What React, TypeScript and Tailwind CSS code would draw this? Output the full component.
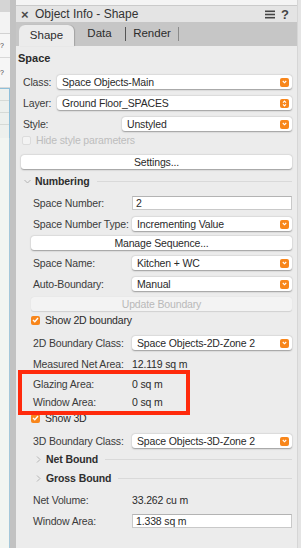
import React from "react";

// Object Info palette – Vectorworks style (macOS)

const ORANGE = "bg-[#f8861b]";
const TXT = "text-[10.5px] leading-[13px] tracking-[-0.15px] whitespace-nowrap";

function Chevron({ double }: { double?: boolean }) {
  return (
    <span className={`flex h-[9px] w-[9px] shrink-0 items-center justify-center rounded-[2px] ${ORANGE}`}>
      {double ? (
        <svg width="5" height="7" viewBox="0 0 5 7" fill="none" stroke="white" strokeWidth="1.1">
          <path d="M1 2.6 L2.5 1.1 L4 2.6" />
          <path d="M1 4.4 L2.5 5.9 L4 4.4" />
        </svg>
      ) : (
        <svg width="5" height="4" viewBox="0 0 5 4" fill="none" stroke="white" strokeWidth="1.1">
          <path d="M0.8 1 L2.5 2.8 L4.2 1" />
        </svg>
      )}
    </span>
  );
}

function Drop({ value, double, className = "" }: { value: string; double?: boolean; className?: string }) {
  return (
    <div
      className={`flex h-[14px] items-center rounded-[3px] bg-white pl-[5px] pr-[3px] shadow-[0_0.5px_1.5px_rgba(0,0,0,0.35)] ${className}`}
    >
      <span className={`flex-1 overflow-hidden text-[#2a2a2a] ${TXT}`}>{value}</span>
      <Chevron double={double} />
    </div>
  );
}

function Field({ value }: { value: string }) {
  return (
    <div className={`flex h-[14px] flex-1 items-center border border-[#c9c9c9] border-t-[#b3b3b3] bg-white pl-[3px] text-[#2a2a2a] ${TXT}`}>
      {value}
    </div>
  );
}

function Button({ label, disabled }: { label: string; disabled?: boolean }) {
  return (
    <div
      className={`flex h-[14px] items-center justify-center rounded-[3px] ${TXT} ${
        disabled
          ? "bg-[#f3f3f3] text-[#b9b9b9] shadow-[0_0.5px_1px_rgba(0,0,0,0.12)]"
          : "bg-white text-[#2a2a2a] shadow-[0_0.5px_1.5px_rgba(0,0,0,0.35)]"
      }`}
    >
      {label}
    </div>
  );
}

function Check({ on, disabled }: { on?: boolean; disabled?: boolean }) {
  if (on) {
    return (
      <span className={`flex h-[9px] w-[9px] shrink-0 items-center justify-center rounded-[2px] ${ORANGE}`}>
        <svg width="7" height="6" viewBox="0 0 7 6" fill="none" stroke="white" strokeWidth="1.4">
          <path d="M1 3 L2.8 4.8 L6 1" />
        </svg>
      </span>
    );
  }
  return (
    <span
      className={`h-[9px] w-[9px] shrink-0 rounded-[2px] border ${
        disabled ? "border-[#dcdcdc] bg-[#f3f3f3]" : "border-[#b5b5b5] bg-white"
      }`}
    />
  );
}

function Row({ label, children, className = "" }: { label: string; children: React.ReactNode; className?: string }) {
  return (
    <div className={`flex h-[14px] items-center pl-[17px] ${className}`}>
      <span className={`w-[99px] shrink-0 text-[#3b3b3b] ${TXT}`}>{label}</span>
      {children}
    </div>
  );
}

function Group({ label, open, indent, className = "" }: { label: string; open?: boolean; indent: string; className?: string }) {
  return (
    <div className={`flex h-[14px] items-center ${indent} ${className}`}>
      <svg width="7" height="7" viewBox="0 0 7 7" fill="none" stroke="#b4b4b4" strokeWidth="1" className="shrink-0">
        {open ? <path d="M0.5 2 L3.5 5 L6.5 2" /> : <path d="M2 0.5 L5 3.5 L2 6.5" />}
      </svg>
      <span className="ml-[4px] shrink-0 whitespace-nowrap text-[10.5px] font-bold leading-[13px] tracking-[-0.1px] text-[#2e2e2e]">
        {label}
      </span>
      <span className="ml-[7px] h-px flex-1 bg-[#d9d9d9]" />
    </div>
  );
}

function LeftEdge() {
  return (
    <div className="flex w-[10px] shrink-0 flex-col overflow-hidden">
      <div className="h-[12px] bg-[#d5d5d5]" />
      <div className="h-[22px] border-b border-[#d2d2d2] bg-[#f3f3f3]" />
      <div className="flex h-[24px] items-center border-b border-[#d8d8d8] bg-[#f6f6f6]">
        <span className="text-[7px] leading-none text-[#444]">?</span>
      </div>
      <div className="flex h-[30px] items-center border-b border-[#d8d8d8] bg-[#f6f6f6]">
        <span className="text-[7px] leading-none text-[#444]">?</span>
      </div>
      <div className="h-[50px] border-t border-r border-[#8fc0da] bg-[#edf0ed]">
        <div className="h-[12px] border-b border-[#d6dad6]" />
        <div className="h-[12px] border-b border-[#d6dad6]" />
        <div className="h-[12px] border-b border-[#d6dad6]" />
      </div>
      <div className="flex-1 border-r border-[#a5c8da] bg-[#f2f5f1]" />
    </div>
  );
}

export default function App() {
  return (
    <div className="flex h-[548px] w-[301px] overflow-hidden bg-[#e3e3e3] font-['Liberation_Sans',Arial,sans-serif]">
      <LeftEdge />
      <div className="w-[6px] shrink-0 bg-[#c2c2c2]" />

      {/* palette */}
      <div className="flex w-[281px] shrink-0 flex-col bg-[#ececec]">
        <div className="h-[6px] border-b border-[#cacaca] bg-[#f4f4f4]" />
        <div className="flex h-[16px] items-center bg-[#e4e4e4] pl-[5px] pr-[8px]">
          <span className="w-[14px] text-[13px] font-bold leading-none text-[#4a4a4a]">×</span>
          <span className="flex-1 text-[12px] leading-none text-[#333]">Object Info - Shape</span>
          <svg width="10" height="9" viewBox="0 0 10 9" className="mr-[6px]">
            <rect x="0" y="0.5" width="10" height="1.6" fill="#444" />
            <rect x="0" y="3.7" width="10" height="1.6" fill="#444" />
            <rect x="0" y="6.9" width="10" height="1.6" fill="#444" />
          </svg>
          <span className="text-[13px] font-bold leading-none text-[#444]">?</span>
        </div>

        {/* tabs */}
        <div className="flex h-[24px] items-end bg-[#c6c6c6]">
          <div className="ml-[3px] flex h-[21px] w-[55px] items-center justify-center rounded-t-[6px] bg-[#ececec] text-[11.5px] text-[#2c2c2c] shadow-[1px_0_1px_rgba(0,0,0,0.18)]">
            Shape
          </div>
          <div className="flex h-[24px] w-[51px] items-center justify-center text-[11.5px] text-[#2c2c2c]">Data</div>
          <span className="h-[14px] w-px self-center bg-[#555]" />
          <div className="flex h-[24px] w-[52px] items-center justify-center text-[11.5px] text-[#2c2c2c]">Render</div>
          <span className="h-[14px] w-px self-center bg-[#8a8a8a]" />
        </div>

        {/* body */}
        <div className="flex flex-col pr-[5px]">
          <div className="mt-[5px] flex h-[14px] items-center pl-[2px] text-[11px] font-bold leading-none text-[#2a2a2a]">
            Space
          </div>

          <div className="mt-[10px] flex h-[14px] items-center pl-[7px]">
            <span className={`w-[34px] text-[#3b3b3b] ${TXT}`}>Class:</span>
            <Drop value="Space Objects-Main" className="flex-1" />
          </div>
          <div className="mt-[7px] flex h-[14px] items-center pl-[7px]">
            <span className={`w-[34px] text-[#3b3b3b] ${TXT}`}>Layer:</span>
            <Drop value="Ground Floor_SPACES" double className="flex-1" />
          </div>
          <div className="mt-[7px] flex h-[14px] items-center pl-[7px]">
            <span className={`w-[99px] text-[#3b3b3b] ${TXT}`}>Style:</span>
            <Drop value="Unstyled" className="flex-1" />
          </div>
          <div className="mt-[2px] flex h-[14px] items-center pl-[6px]">
            <Check disabled />
            <span className={`ml-[5px] text-[#bdbdbd] ${TXT}`}>Hide style parameters</span>
          </div>
          <div className="mt-[8px] pl-[5px]">
            <Button label="Settings..." />
          </div>

          <Group label="Numbering" open indent="pl-[8px]" className="mt-[5px]" />

          <Row label="Space Number:" className="mt-[8px]">
            <Field value="2" />
          </Row>
          <Row label="Space Number Type:" className="mt-[7px]">
            <Drop value="Incrementing Value" className="flex-1" />
          </Row>
          <div className="mt-[5px] pl-[15px]">
            <Button label="Manage Sequence..." />
          </div>
          <Row label="Space Name:" className="mt-[6px]">
            <Drop value="Kitchen + WC" className="flex-1" />
          </Row>
          <Row label="Auto-Boundary:" className="mt-[7px]">
            <Drop value="Manual" className="flex-1" />
          </Row>
          <div className="mt-[6px] pl-[15px]">
            <Button label="Update Boundary" disabled />
          </div>
          <div className="mt-[2px] flex h-[14px] items-center pl-[15px]">
            <Check on />
            <span className={`ml-[5px] text-[#2a2a2a] ${TXT}`}>Show 2D boundary</span>
          </div>
          <Row label="2D Boundary Class:" className="mt-[9px]">
            <Drop value="Space Objects-2D-Zone 2" className="flex-1" />
          </Row>
          <Row label="Measured Net Area:" className="mt-[7px]">
            <span className={`text-[#2a2a2a] ${TXT}`}>12.119 sq m</span>
          </Row>

          {/* highlighted rows */}
          <div className="relative">
            <Row label="Glazing Area:" className="mt-[6px]">
              <span className={`text-[#2a2a2a] ${TXT}`}>0 sq m</span>
            </Row>
            <Row label="Window Area:" className="mt-[4px]">
              <span className={`text-[#2a2a2a] ${TXT}`}>0 sq m</span>
            </Row>
            <div className="pointer-events-none absolute left-[2px] top-[-1px] h-[45px] w-[172px] border-[4px] border-[#ff2a0c]" />
          </div>

          <div className="mt-[2px] flex h-[14px] items-center pl-[15px]">
            <Check on />
            <span className={`ml-[5px] text-[#2a2a2a] ${TXT}`}>Show 3D</span>
          </div>
          <Row label="3D Boundary Class:" className="mt-[9px]">
            <Drop value="Space Objects-3D-Zone 2" className="flex-1" />
          </Row>
          <Group label="Net Bound" indent="pl-[19px]" className="mt-[4px]" />
          <Group label="Gross Bound" indent="pl-[19px]" className="mt-[5px]" />
          <Row label="Net Volume:" className="mt-[8px]">
            <span className={`text-[#2a2a2a] ${TXT}`}>33.262 cu m</span>
          </Row>
          <Row label="Window Area:" className="mt-[7px]">
            <Field value="1.338 sq m" />
          </Row>
        </div>
      </div>

      <div className="w-[4px] shrink-0 border-l border-[#d6d6d6] bg-[#e4e4e4]" />
    </div>
  );
}
